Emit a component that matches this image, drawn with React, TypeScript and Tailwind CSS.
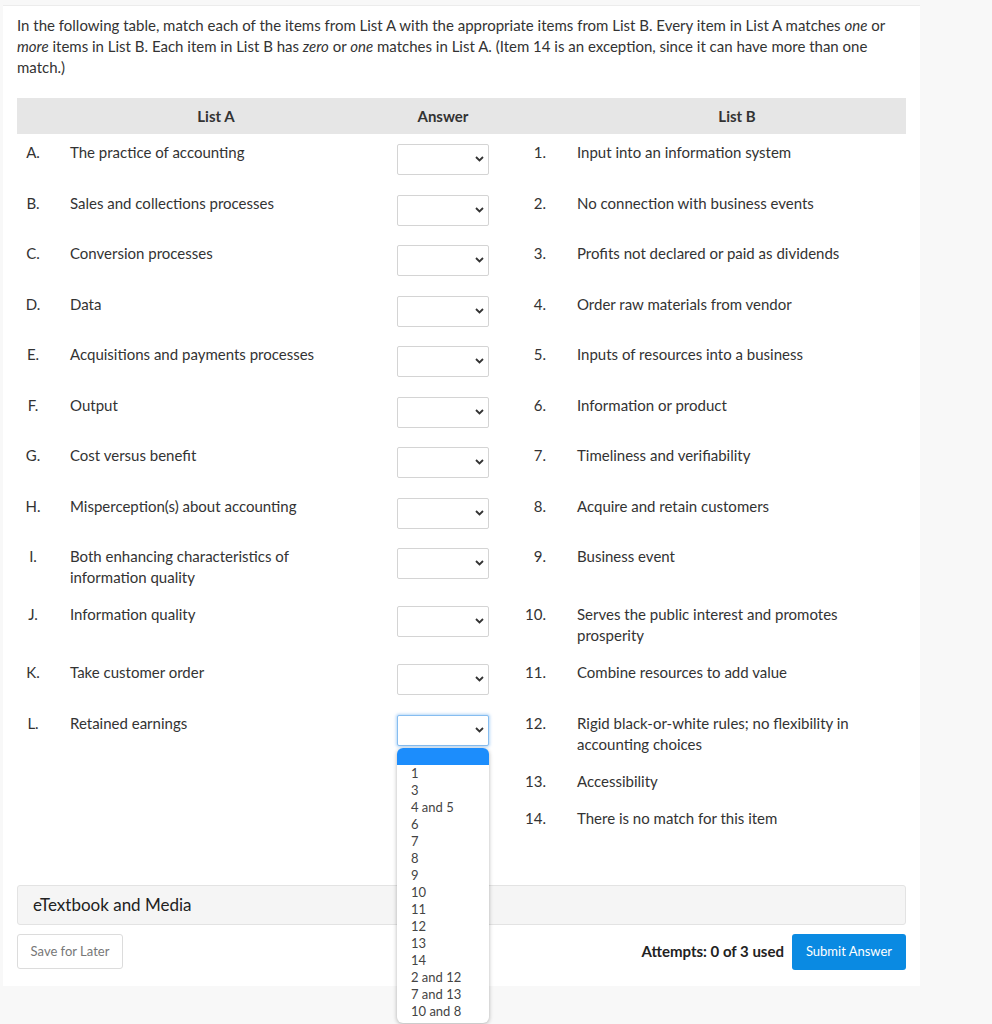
const rows = [
  { l: 'A.', a: 'The practice of accounting', n: '1.', b: 'Input into an information system' },
  { l: 'B.', a: 'Sales and collections processes', n: '2.', b: 'No connection with business events' },
  { l: 'C.', a: 'Conversion processes', n: '3.', b: 'Profits not declared or paid as dividends' },
  { l: 'D.', a: 'Data', n: '4.', b: 'Order raw materials from vendor' },
  { l: 'E.', a: 'Acquisitions and payments processes', n: '5.', b: 'Inputs of resources into a business' },
  { l: 'F.', a: 'Output', n: '6.', b: 'Information or product' },
  { l: 'G.', a: 'Cost versus benefit', n: '7.', b: 'Timeliness and verifiability' },
  { l: 'H.', a: 'Misperception(s) about accounting', n: '8.', b: 'Acquire and retain customers' },
  { l: 'I.', a: 'Both enhancing characteristics of information quality', n: '9.', b: 'Business event' },
  { l: 'J.', a: 'Information quality', n: '10.', b: 'Serves the public interest and promotes prosperity' },
  { l: 'K.', a: 'Take customer order', n: '11.', b: 'Combine resources to add value' },
  { l: 'L.', a: 'Retained earnings', n: '12.', b: 'Rigid black-or-white rules; no flexibility in accounting choices', open: true },
  { l: '', a: '', n: '13.', b: 'Accessibility' },
  { l: '', a: '', n: '14.', b: 'There is no match for this item' },
];

const options = ['1', '3', '4 and 5', '6', '7', '8', '9', '10', '11', '12', '13', '14', '2 and 12', '7 and 13', '10 and 8'];

function Chevron() {
  return (
    <svg width="9" height="6" viewBox="0 0 9 6" className="absolute right-[5px] top-[12px]">
      <path d="M1 1 L4.5 4.5 L8 1" fill="none" stroke="#333" strokeWidth="1.8" />
    </svg>
  );
}

function FakeSelect({ open }: { open?: boolean }) {
  return (
    <div className="relative w-[92px] h-[31px]">
      <div
        className={
          open
            ? 'w-full h-full bg-white rounded-[2px] border border-[#86bdf0] shadow-[0_0_3px_1px_rgba(120,180,240,0.55)]'
            : 'w-full h-full bg-white rounded-[2px] border border-[#d4d4d4]'
        }
      />
      <Chevron />
      {open && (
        <div className="absolute left-0 top-[33px] w-[92px] z-10 bg-white rounded-[6px] overflow-hidden shadow-[0_1px_4px_rgba(0,0,0,0.3)] pb-[3px]">
          <div className="h-[17px] bg-[#1c8dfc]" />
          {options.map((o) => (
            <div key={o} className="pl-[14px] text-[13px] leading-[17px] text-[#444]">
              {o}
            </div>
          ))}
        </div>
      )}
    </div>
  );
}

export default function App() {
  return (
    <div className="min-h-screen bg-[#f8f8f8] pl-[3px] pt-[5px] font-['Lato',sans-serif] text-[15px] leading-[21px] text-[#333]">
      <div className="w-[917px] bg-white border-t border-[#ececec] pl-[14px] pr-[14px] pt-[9px] pb-[16px]">
        <p className="w-[889px]">
          In the following table, match each of the items from List A with the appropriate items from List B. Every item in
          List A matches <i>one</i> or <i>more</i> items in List B. Each item in List B has <i>zero</i> or <i>one</i> matches
          in List A. (Item 14 is an exception, since it can have more than one match.)
        </p>

        {/* header */}
        <div className="mt-[20px] w-[889px] h-[36px] grid grid-cols-[44px_310px_144px_53px_338px] items-center bg-[#e6e6e6] font-bold">
          <div />
          <div className="text-center">List A</div>
          <div className="text-center">Answer</div>
          <div />
          <div className="text-center">List B</div>
        </div>

        {/* rows */}
        <div className="w-[889px] grid grid-cols-[44px_310px_144px_53px_338px]">
          {rows.map((r) => (
            <div key={r.n} className="contents">
              <div className="py-2">
                <div className="w-[32px] text-center">{r.l}</div>
              </div>
              <div className="py-2 pl-[9px] pr-[40px]">{r.a}</div>
              <div className="flex justify-center pt-[10px] pb-[9.5px]">
                {r.l && <FakeSelect open={r.open} />}
              </div>
              <div className="py-2 pr-[22px] text-right">{r.n}</div>
              <div className="py-2 pl-[9px] pr-[16px]">{r.b}</div>
            </div>
          ))}
        </div>

        <div className="mt-[48px] w-[889px] h-[40px] flex items-center pl-[15px] bg-[#f5f5f5] border border-[#e3e3e3] rounded-[3px] text-[17px] text-[#222]">
          eTextbook and Media
        </div>

        <div className="mt-[9px] w-[889px] flex items-center justify-between">
          <button className="w-[106px] h-[35px] border border-[#dcdcdc] rounded-[3px] bg-white text-[13px] text-[#777]">
            Save for Later
          </button>
          <div className="flex items-center gap-[8px]">
            <span className="font-bold text-[#222]">Attempts: 0 of 3 used</span>
            <button className="w-[114px] h-[36px] rounded-[3px] bg-[#0a8ae2] text-white text-[13px]">Submit Answer</button>
          </div>
        </div>
      </div>
    </div>
  );
}
